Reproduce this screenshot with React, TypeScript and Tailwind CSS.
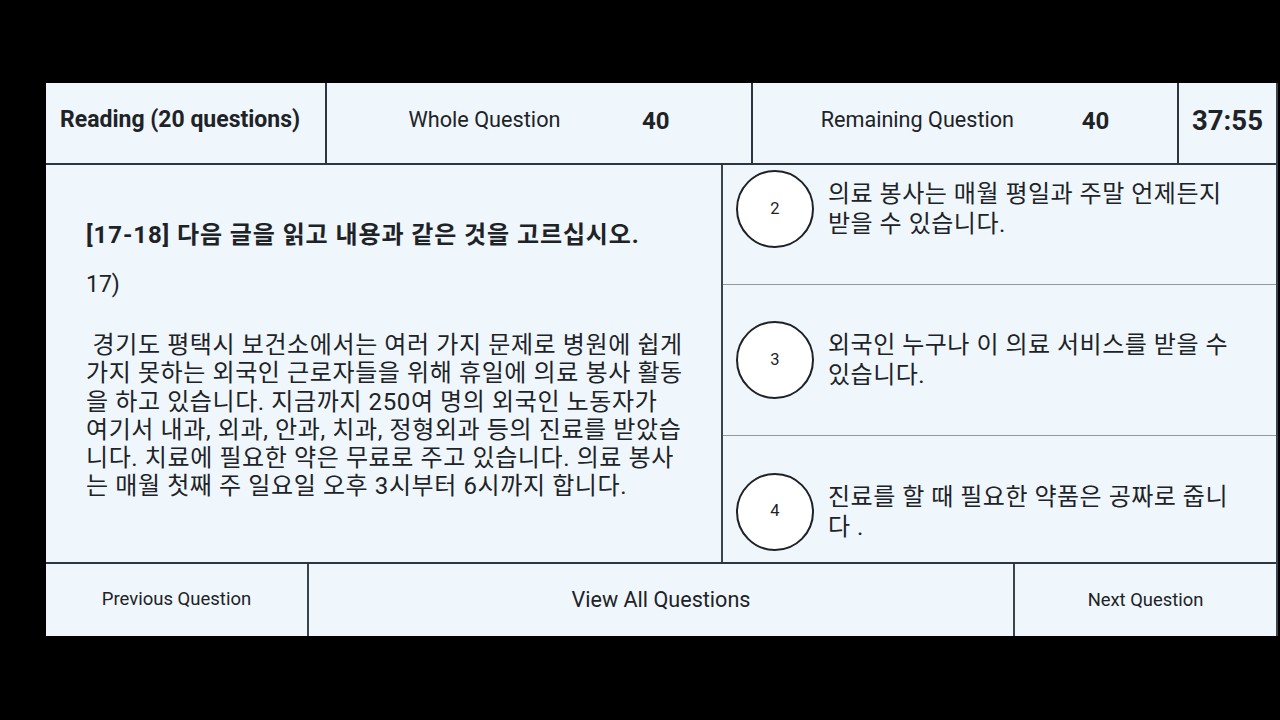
import React from "react";

const FONT = { fontFamily: 'Roboto, "Noto Sans CJK KR", sans-serif' };

const options = [
  { n: 2, lines: ["의료 봉사는 매월 평일과 주말 언제든지", "받을 수 있습니다."] },
  { n: 3, lines: ["외국인 누구나 이 의료 서비스를 받을 수", "있습니다."] },
  { n: 4, lines: ["진료를 할 때 필요한 약품은 공짜로 줍니", "다 ."] },
];

const passage = [
  "\u00a0경기도 평택시 보건소에서는 여러 가지 문제로 병원에 쉽게",
  "가지 못하는 외국인 근로자들을 위해 휴일에 의료 봉사 활동",
  "을 하고 있습니다. 지금까지 250여 명의 외국인 노동자가",
  "여기서 내과, 외과, 안과, 치과, 정형외과 등의 진료를 받았습",
  "니다. 치료에 필요한 약은 무료로 주고 있습니다. 의료 봉사",
  "는 매월 첫째 주 일요일 오후 3시부터 6시까지 합니다.",
];

export default function App() {
  return (
    <div className="w-[1280px] h-[720px] bg-black pt-[83px] pl-[46px]" style={FONT}>
      <div className="w-[1232px] h-[553px] bg-[#eff6fc] text-[#202326] flex flex-col border-r-2 border-[#3a444d]">
        {/* Header */}
        <div className="h-[82px] flex border-b-2 border-[#2c3640]">
          <div className="w-[281px] border-r-2 border-[#2c3640] flex items-center pl-[14px] pb-[5px] text-[23px] font-bold">
            Reading (20 questions)
          </div>
          <div className="w-[426px] border-r-2 border-[#2c3640] flex items-center justify-evenly pb-[5px]">
            <span className="text-[21.7px]">Whole Question</span>
            <span className="text-[24px] font-bold">40</span>
          </div>
          <div className="w-[426px] border-r-2 border-[#2c3640] flex items-center justify-evenly pb-[5px]">
            <span className="text-[21.6px]">Remaining Question</span>
            <span className="text-[24px] font-bold">40</span>
          </div>
          <div className="flex-1 flex items-center justify-center pb-[5px] text-[27.5px] font-bold">37:55</div>
        </div>

        {/* Main */}
        <div className="h-[397px] flex">
          <div className="w-[677px] border-r-2 border-[#3a444d] pl-[40px] pt-[54px]">
            <div className="text-[24px] font-bold leading-[32px] tracking-[0.9px] whitespace-nowrap">
              [17-18] 다음 글을 읽고 내용과 같은 것을 고르십시오.
            </div>
            <div className="text-[23px] leading-[32px] mt-[18px]">17)</div>
            <div className="mt-[30px] text-[24px] leading-[28.3px] tracking-[0.6px]">
              {passage.map((l, i) => (
                <div key={i} className="whitespace-pre">{l}</div>
              ))}
            </div>
          </div>
          <div
            className="flex-1 overflow-hidden"
            ref={(el) => {
              if (el) el.scrollTop = 31;
            }}
          >
            <div className="flex flex-col">
              {options.map((o, i) => (
                <div
                  key={o.n}
                  className={`h-[151px] shrink-0 flex items-center pl-[13px] gap-[14px] ${i < options.length - 1 ? "border-b border-[#8e9aa4]" : ""}`}
                >
                  <div className="w-[78px] h-[78px] shrink-0 rounded-full border-2 border-[#1e2226] bg-white flex items-center justify-center text-[16.5px]">
                    {o.n}
                  </div>
                  <div className="text-[24px] leading-[30px] tracking-[0.5px]">
                    {o.lines.map((l, j) => (
                      <div key={j} className="whitespace-pre">{l}</div>
                    ))}
                  </div>
                </div>
              ))}
              <div className="h-[151px] shrink-0" />
            </div>
          </div>
        </div>

        {/* Footer */}
        <div className="flex-1 flex border-t-2 border-[#2c3640]">
          <div className="w-[263px] border-r-2 border-[#3a444d] flex items-center justify-center text-[18.5px]">
            Previous Question
          </div>
          <div className="w-[706px] border-r-2 border-[#3a444d] flex items-center justify-center text-[21.6px]">
            View All Questions
          </div>
          <div className="flex-1 flex items-center justify-center text-[18.4px]">Next Question</div>
        </div>
      </div>
    </div>
  );
}
